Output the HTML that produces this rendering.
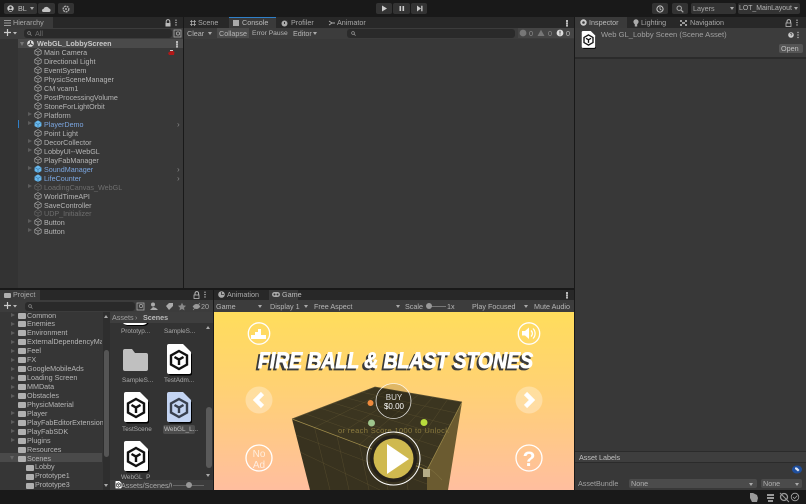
<!DOCTYPE html>
<html><head><meta charset="utf-8"><style>
html,body{margin:0;padding:0;background:#191919}
#r{position:relative;width:806px;height:504px;overflow:hidden;background:#191919;font-family:"Liberation Sans",sans-serif;font-size:7px;color:#b6b6b6;filter:blur(.3px)}
.b{position:absolute}
.t{position:absolute;white-space:nowrap;line-height:9px;height:9px;font-size:7.2px;color:#b6b6b6}
.h{position:absolute;white-space:nowrap;line-height:9px;height:9px;font-size:7.2px;color:#b6b6b6;left:44px}
.blue{color:#7ba6e0}.dim{color:#6e6e6e}
.btn{position:absolute;background:#3a3a3a;border-radius:2px}
svg{position:absolute;overflow:visible}
.ar{position:absolute;width:0;height:0;border-top:2.5px solid transparent;border-bottom:2.5px solid transparent;border-left:4px solid #666}
.dn{position:absolute;width:0;height:0;border-left:2.5px solid transparent;border-right:2.5px solid transparent;border-top:3px solid #aaa}
.gt{position:absolute;left:177px;color:#888;font-size:8px;line-height:9px}
.fd{position:absolute;left:18px;width:8px;height:6px;background:#b0b0b0;border-radius:1px}
.ta{position:absolute;width:0;height:0;border-top:2.5px solid transparent;border-bottom:2.5px solid transparent;border-left:4px solid #5c5c5c;left:11px}
</style></head><body><div id="r">
<svg width="0" height="0" style="position:absolute"><defs>
<symbol id="c" viewBox="0 0 10 10"><path d="M5 .8 9 3v4.2L5 9.4 1 7.2V3zM1 3l4 2.2L9 3M5 5.2v4.2" fill="none" stroke="#adadad" stroke-width=".8"/></symbol>
<symbol id="d" viewBox="0 0 10 10"><path d="M5 .8 9 3v4.2L5 9.4 1 7.2V3zM1 3l4 2.2L9 3M5 5.2v4.2" fill="none" stroke="#666" stroke-width=".8"/></symbol>
<symbol id="p" viewBox="0 0 10 10"><path d="M5 .5 9.3 3v4.6L5 9.8.7 7.6V3z" fill="#67b8ee"/><path d="M.7 3 5 5.4 9.3 3M5 5.4v4.4" fill="none" stroke="#2b5a80" stroke-width=".6"/></symbol>
<symbol id="u" viewBox="0 0 26 32"><path d="M2 3 Q2 1 4 1H17L25 9V28Q25 30 23 30H4Q2 30 2 28Z" fill="#000" transform="translate(1 1.5)"/><path d="M1 2Q1 0 3 0H17L25 8V28Q25 30 23 30H3Q1 30 1 28Z" fill="#fff"/><path d="M13 7 21 11.5V20.5L13 25 5 20.5V11.5ZM8.5 13 13 15.6 17.5 13M13 15.6V21" fill="none" stroke="#111" stroke-width="2.4"/></symbol>
<symbol id="ub" viewBox="0 0 26 32"><path d="M2 3 Q2 1 4 1H17L25 9V28Q25 30 23 30H4Q2 30 2 28Z" fill="#000" transform="translate(1 1.5)"/><path d="M1 2Q1 0 3 0H17L25 8V28Q25 30 23 30H3Q1 30 1 28Z" fill="#c3d4f2"/><path d="M13 7 21 11.5V20.5L13 25 5 20.5V11.5ZM8.5 13 13 15.6 17.5 13M13 15.6V21" fill="none" stroke="#38404e" stroke-width="2.4"/></symbol>
</defs></svg>

<!-- top bar -->
<div class="btn" style="left:4px;top:3px;width:33px;height:11px;background:#333"></div>
<svg style="left:7px;top:5px" width="7" height="7" viewBox="0 0 7 7"><circle cx="3.5" cy="3.5" r="3.2" fill="#ccc"/><circle cx="3.5" cy="2.7" r="1.2" fill="#333"/><path d="M1.5 6c.5-1.6 3.5-1.6 4 0" fill="#333"/></svg>
<div class="t" style="left:18px;top:4px;color:#c0c0c0">BL</div><div class="dn" style="left:30px;top:7px"></div>
<div class="btn" style="left:38px;top:3px;width:17px;height:11px;background:#333"></div>
<svg style="left:42px;top:6px" width="9" height="6" viewBox="0 0 9 6"><path d="M1.5 6A1.5 1.5 0 0 1 1.5 3 3 3 0 0 1 7 2.5 1.8 1.8 0 0 1 7.3 6Z" fill="#c4c4c4"/></svg>
<div class="btn" style="left:58px;top:3px;width:16px;height:11px;background:#333"></div>
<svg style="left:62px;top:5px" width="8" height="8" viewBox="0 0 8 8"><circle cx="4" cy="4" r="2.8" fill="none" stroke="#aaa" stroke-width="1.4" stroke-dasharray="2 .7"/><circle cx="4" cy="4" r="1" fill="#aaa"/></svg>

<div class="btn" style="left:376px;top:3px;width:16px;height:11px;background:#333"></div>
<div class="btn" style="left:393px;top:3px;width:17px;height:11px;background:#333"></div>
<div class="btn" style="left:411px;top:3px;width:16px;height:11px;background:#333"></div>
<svg style="left:376px;top:3px" width="52" height="11" viewBox="0 0 52 11"><path d="M6 2.5 11 5.5 6 8.5Z" fill="#ccc"/><path d="M23.5 3h1.6v5h-1.6zM26.5 3h1.6v5h-1.6z" fill="#ccc"/><path d="M41 2.5 45 5.5 41 8.5ZM45.2 2.7h1.3v5.6h-1.3z" fill="#ccc"/></svg>

<div class="btn" style="left:652px;top:3px;width:16px;height:11px;background:#333"></div>
<svg style="left:656px;top:5px" width="8" height="8" viewBox="0 0 8 8"><circle cx="4" cy="4" r="3.1" fill="none" stroke="#ccc"/><path d="M4 2v2.2l1.5 1" fill="none" stroke="#ccc" stroke-width=".8"/></svg>
<div class="btn" style="left:672px;top:3px;width:16px;height:11px;background:#333"></div>
<svg style="left:676px;top:5px" width="8" height="8" viewBox="0 0 8 8"><circle cx="3.2" cy="3.2" r="2.2" fill="none" stroke="#aaa"/><path d="M4.8 4.8 7.3 7.3" stroke="#aaa" stroke-width="1.1"/></svg>
<div class="btn" style="left:691px;top:3px;width:45px;height:11px;background:#333"></div>
<div class="t" style="left:693px;top:4px;color:#a8a8a8">Layers</div><div class="dn" style="left:730px;top:7px"></div>
<div class="btn" style="left:738px;top:3px;width:62px;height:11px;background:#333"></div>
<div class="t" style="left:739px;top:4px;font-size:6.9px;color:#b4b4b4">LOT_MainLayout</div><div class="dn" style="left:794px;top:7px"></div>

<!-- hierarchy -->
<div class="b" style="left:0;top:17px;width:183px;height:271px;background:#383838"></div>
<div class="b" style="left:0;top:17px;width:183px;height:11px;background:#282828"></div>
<div class="b" style="left:0;top:17px;width:53px;height:11px;background:#3a3a3a"></div>
<svg style="left:4px;top:20px" width="7" height="6" viewBox="0 0 7 6"><path d="M0 .5h7M0 3h7M0 5.5h7" stroke="#999" stroke-width=".9"/></svg>
<div class="t" style="left:13px;top:18px;color:#a8a8a8">Hierarchy</div>
<svg style="left:165px;top:19px" width="12" height="8" viewBox="0 0 12 8"><path d="M1.2 4V2.4a1.8 1.8 0 0 1 3.6 0V4" fill="none" stroke="#bbb"/><rect x=".5" y="4" width="5" height="3.5" fill="#bbb"/><circle cx="11" cy="1.2" r=".7" fill="#bbb"/><circle cx="11" cy="3.6" r=".7" fill="#bbb"/><circle cx="11" cy="6" r=".7" fill="#bbb"/></svg>
<div class="b" style="left:0;top:28px;width:183px;height:11px;background:#3c3c3c"></div>
<svg style="left:4px;top:29px" width="14" height="8" viewBox="0 0 14 8"><path d="M3.5 0v7M0 3.5h7" stroke="#ccc" stroke-width="1.2"/><path d="M9 3h4L11 5.5Z" fill="#bbb"/></svg>
<div class="b" style="left:24px;top:29px;width:148px;height:9px;background:#2a2a2a;border-radius:3px"></div>
<svg style="left:27px;top:31px" width="5" height="5" viewBox="0 0 5 5"><circle cx="2" cy="2" r="1.4" fill="none" stroke="#888" stroke-width=".7"/><path d="M3 3 4.6 4.6" stroke="#888" stroke-width=".7"/></svg>
<div class="t dim" style="left:35px;top:29px;color:#6e6e6e">All</div>
<svg style="left:173px;top:29px" width="9" height="9" viewBox="0 0 9 9"><rect x="1" y="1" width="7" height="7" fill="none" stroke="#aaa" stroke-width=".8"/><circle cx="5" cy="4.5" r="1.6" fill="none" stroke="#aaa" stroke-width=".8"/></svg>
<div class="b" style="left:0;top:39px;width:18px;height:249px;background:#333"></div>
<div class="b" style="left:18px;top:39px;width:165px;height:9px;background:#4a4a4a"></div>
<div class="ar" style="left:20px;top:42px;border:0;border-left:2.5px solid transparent;border-right:2.5px solid transparent;border-top:4px solid #777"></div>
<svg style="left:27px;top:40px" width="7" height="7" viewBox="0 0 7 7"><circle cx="3.5" cy="3.5" r="3.3" fill="#ddd"/><path d="M3.5 1v2.5L1.3 5M3.5 3.5 5.7 5" stroke="#444" stroke-width="1.1" fill="none"/></svg>
<div class="t" style="left:37px;top:39px;font-weight:bold;font-size:7.2px;color:#c8c8c8">WebGL_LobbyScreen</div>
<div class="b" style="left:176px;top:41px;width:1.5px;height:1.5px;background:#bbb;box-shadow:0 2.3px #bbb,0 4.6px #bbb"></div>

<svg style="left:34px;top:48px" width="8" height="8"><use href="#c" width="8" height="8"/></svg><div class="h" style="top:48px">Main Camera</div>
<svg style="left:34px;top:57px" width="8" height="8"><use href="#c" width="8" height="8"/></svg><div class="h" style="top:57px">Directional Light</div>
<svg style="left:34px;top:66px" width="8" height="8"><use href="#c" width="8" height="8"/></svg><div class="h" style="top:66px">EventSystem</div>
<svg style="left:34px;top:75px" width="8" height="8"><use href="#c" width="8" height="8"/></svg><div class="h" style="top:75px">PhysicSceneManager</div>
<svg style="left:34px;top:84px" width="8" height="8"><use href="#c" width="8" height="8"/></svg><div class="h" style="top:84px">CM vcam1</div>
<svg style="left:34px;top:93px" width="8" height="8"><use href="#c" width="8" height="8"/></svg><div class="h" style="top:93px">PostProcessingVolume</div>
<svg style="left:34px;top:102px" width="8" height="8"><use href="#c" width="8" height="8"/></svg><div class="h" style="top:102px">StoneForLightOrbit</div>
<div class="ta" style="left:28px;top:112px"></div><svg style="left:34px;top:111px" width="8" height="8"><use href="#c" width="8" height="8"/></svg><div class="h" style="top:111px">Platform</div>
<div class="b" style="left:18px;top:120px;width:1px;height:8px;background:#2f7fc8"></div>
<div class="ta" style="left:28px;top:121px"></div><svg style="left:34px;top:120px" width="8" height="8"><use href="#p" width="8" height="8"/></svg><div class="h blue" style="top:120px">PlayerDemo</div><div class="gt" style="top:120px">›</div>
<svg style="left:34px;top:129px" width="8" height="8"><use href="#c" width="8" height="8"/></svg><div class="h" style="top:129px">Point Light</div>
<div class="ta" style="left:28px;top:139px"></div><svg style="left:34px;top:138px" width="8" height="8"><use href="#c" width="8" height="8"/></svg><div class="h" style="top:138px">DecorCollector</div>
<div class="ta" style="left:28px;top:148px"></div><svg style="left:34px;top:147px" width="8" height="8"><use href="#c" width="8" height="8"/></svg><div class="h" style="top:147px">LobbyUI--WebGL</div>
<svg style="left:34px;top:156px" width="8" height="8"><use href="#c" width="8" height="8"/></svg><div class="h" style="top:156px">PlayFabManager</div>
<div class="ta" style="left:28px;top:166px"></div><svg style="left:34px;top:165px" width="8" height="8"><use href="#p" width="8" height="8"/></svg><div class="h blue" style="top:165px">SoundManager</div><div class="gt" style="top:165px">›</div>
<svg style="left:34px;top:174px" width="8" height="8"><use href="#p" width="8" height="8"/></svg><div class="h blue" style="top:174px">LifeCounter</div><div class="gt" style="top:174px">›</div>
<div class="ta" style="left:28px;top:184px"></div><svg style="left:34px;top:183px" width="8" height="8"><use href="#d" width="8" height="8"/></svg><div class="h dim" style="top:183px">LoadingCanvas_WebGL</div>
<svg style="left:34px;top:192px" width="8" height="8"><use href="#c" width="8" height="8"/></svg><div class="h" style="top:192px">WorldTimeAPI</div>
<svg style="left:34px;top:201px" width="8" height="8"><use href="#c" width="8" height="8"/></svg><div class="h" style="top:201px">SaveController</div>
<svg style="left:34px;top:209px" width="8" height="8"><use href="#d" width="8" height="8"/></svg><div class="h dim" style="top:209px">UDP_Initializer</div>
<div class="ta" style="left:28px;top:219px"></div><svg style="left:34px;top:218px" width="8" height="8"><use href="#c" width="8" height="8"/></svg><div class="h" style="top:218px">Button</div>
<div class="ta" style="left:28px;top:228px"></div><svg style="left:34px;top:227px" width="8" height="8"><use href="#c" width="8" height="8"/></svg><div class="h" style="top:227px">Button</div>
<svg style="left:167px;top:49px" width="8" height="7" viewBox="0 0 8 7"><path d="M1 4 5 1 7.500 3 7 6H2Z" fill="#b01818"/><path d="M3 1.500h3" stroke="#ccc"/></svg>

<!-- console -->
<div class="b" style="left:184px;top:17px;width:390px;height:271px;background:#383838"></div>
<div class="b" style="left:184px;top:17px;width:390px;height:11px;background:#282828"></div>
<div class="b" style="left:229px;top:17px;width:47px;height:11px;background:#3a3a3a;border-top:1px solid #2f7fc8;box-sizing:border-box"></div>
<svg style="left:190px;top:20px" width="6" height="6" viewBox="0 0 6 6"><path d="M1.500 0v6M4.500 0v6M0 1.500h6M0 4.500h6" stroke="#aaa" stroke-width=".8"/></svg>
<div class="t" style="left:198px;top:18px;color:#a8a8a8">Scene</div>
<div class="b" style="left:233px;top:20px;width:6px;height:6px;background:#aaa"></div>
<div class="t" style="left:242px;top:18px;color:#bbb">Console</div>
<svg style="left:281px;top:19px" width="8" height="8" viewBox="0 0 8 8"><circle cx="3.500" cy="4.500" r="3" fill="#aaa"/><path d="M3.500 3v2M5.500 1 7 2.500" stroke="#333"/></svg>
<div class="t" style="left:291px;top:18px;color:#a8a8a8">Profiler</div>
<svg style="left:328px;top:20px" width="7" height="6" viewBox="0 0 7 6"><path d="M1 1 4 3 1 5M4 3h3" fill="none" stroke="#aaa" stroke-width=".9"/></svg>
<div class="t" style="left:337px;top:18px;color:#a8a8a8">Animator</div>
<div class="b" style="left:184px;top:28px;width:390px;height:11px;background:#3c3c3c"></div>
<div class="t" style="left:187px;top:29px">Clear</div><div class="dn" style="left:208px;top:32px"></div>
<div class="b" style="left:217px;top:28px;width:32px;height:10px;background:#4c4c4c"></div><div class="t" style="left:219px;top:29px">Collapse</div>
<div class="t" style="left:252px;top:29px;font-size:6.7px">Error Pause</div>
<div class="t" style="left:293px;top:29px">Editor</div><div class="dn" style="left:313px;top:32px"></div>
<div class="b" style="left:347px;top:29px;width:168px;height:9px;background:#2a2a2a;border-radius:3px"></div>
<svg style="left:351px;top:31px" width="5" height="5" viewBox="0 0 5 5"><circle cx="2" cy="2" r="1.400" fill="none" stroke="#999" stroke-width=".7"/><path d="M3 3 4.600 4.600" stroke="#999" stroke-width=".7"/></svg>
<div class="b" style="left:518px;top:28px;width:56px;height:10px;background:#454545"></div>
<svg style="left:519px;top:29px" width="55" height="8" viewBox="0 0 55 8"><circle cx="4" cy="4" r="3.400" fill="#777"/><path d="M22 .7 25.500 7h-7Z" fill="#777"/><circle cx="41" cy="4" r="3.400" fill="#ddd"/><path d="M41 1.800v2.800M41 5.400v.8" stroke="#444"/></svg>
<div class="t" style="left:529px;top:29px;color:#8e8e8e">0</div><div class="t" style="left:548px;top:29px;color:#8e8e8e">0</div><div class="t" style="left:566px;top:29px;color:#bbb">0</div>
<div class="b" style="left:566px;top:20px;width:1.500px;height:1.500px;background:#bbb;box-shadow:0 2.300px #bbb,0 4.600px #bbb"></div>

<!-- inspector -->
<div class="b" style="left:575px;top:17px;width:231px;height:473px;background:#383838"></div>
<div class="b" style="left:575px;top:17px;width:231px;height:11px;background:#282828"></div>
<div class="b" style="left:575px;top:17px;width:52px;height:11px;background:#3a3a3a"></div>
<svg style="left:580px;top:19px" width="7" height="7" viewBox="0 0 7 7"><circle cx="3.500" cy="3.500" r="3.200" fill="#ccc"/><circle cx="3.500" cy="3.500" r="1.300" fill="#3a3a3a"/></svg>
<div class="t" style="left:589px;top:18px;color:#bbb">Inspector</div>
<svg style="left:633px;top:19px" width="6" height="8" viewBox="0 0 6 8"><circle cx="3" cy="2.800" r="2.600" fill="#aaa"/><rect x="1.800" y="5" width="2.400" height="2.500" fill="#aaa"/></svg>
<div class="t" style="left:641px;top:18px;color:#a8a8a8">Lighting</div>
<svg style="left:680px;top:20px" width="7" height="6" viewBox="0 0 7 6"><path d="M0 0h2v2H0zM5 0h2v2H5zM0 4h2v2H0zM5 4h2v2H5zM2 2h3v2H2z" fill="#999"/></svg>
<div class="t" style="left:690px;top:18px;color:#a8a8a8">Navigation</div>
<svg style="left:785px;top:19px" width="14" height="8" viewBox="0 0 14 8"><path d="M2 4V2.400a1.800 1.800 0 0 1 3.600 0V4" fill="none" stroke="#bbb"/><rect x="1" y="4" width="5" height="3.500" fill="none" stroke="#bbb" stroke-width=".8"/><circle cx="12" cy="1.200" r=".7" fill="#bbb"/><circle cx="12" cy="3.600" r=".7" fill="#bbb"/><circle cx="12" cy="6" r=".7" fill="#bbb"/></svg>
<div class="b" style="left:575px;top:28px;width:231px;height:29px;background:#3c3c3c"></div>
<svg style="left:581px;top:31px" width="15" height="18"><use href="#u" width="15" height="18"/></svg>
<div class="t" style="left:601px;top:30px;font-size:7.6px;color:#a0a0a0">Web GL_Lobby Sceen (Scene Asset)</div>
<svg style="left:788px;top:31px" width="12" height="8" viewBox="0 0 12 8"><circle cx="3" cy="4" r="2.800" fill="#ccc"/><path d="M2 3.200c.3-1 2-1 2 .1 0 .7-1 .7-1 1.300" stroke="#333" stroke-width=".7" fill="none"/><circle cx="10" cy="1.500" r=".7" fill="#bbb"/><circle cx="10" cy="4" r=".7" fill="#bbb"/><circle cx="10" cy="6.500" r=".7" fill="#bbb"/></svg>
<div class="btn" style="left:779px;top:44px;width:24px;height:9px;background:#555"></div>
<div class="t" style="left:781px;top:44px;color:#c0c0c0">Open</div>
<div class="b" style="left:575px;top:57px;width:231px;height:2px;background:#2b2b2b"></div>
<div class="b" style="left:575px;top:451px;width:231px;height:12px;background:#3e3e3e;border-top:1px solid #2b2b2b;border-bottom:1px solid #2b2b2b;box-sizing:border-box"></div>
<div class="t" style="left:579px;top:453px;color:#c0c0c0">Asset Labels</div>
<svg style="left:792px;top:465px" width="10" height="9" viewBox="0 0 10 9"><ellipse cx="5" cy="4.500" rx="5" ry="4" fill="#1f4f9e"/><path d="M3 2.500 5 2.500 7.500 5 6 6.500 3 4Z" fill="#dfe6f2"/></svg>
<div class="t" style="left:578px;top:479px;color:#a0a0a0">AssetBundle</div>
<div class="btn" style="left:629px;top:479px;width:128px;height:9px;background:#4b4b4b"></div>
<div class="t" style="left:631px;top:479px;color:#b0b0b0">None</div><div class="dn" style="left:749px;top:483px"></div>
<div class="btn" style="left:761px;top:479px;width:41px;height:9px;background:#4b4b4b"></div>
<div class="t" style="left:763px;top:479px;color:#b0b0b0">None</div><div class="dn" style="left:795px;top:483px"></div>

<!-- project -->
<div class="b" style="left:0;top:290px;width:213px;height:200px;background:#383838"></div>
<div class="b" style="left:0;top:290px;width:213px;height:10px;background:#282828"></div>
<div class="b" style="left:0;top:290px;width:40px;height:10px;background:#3a3a3a"></div>
<div class="fd" style="left:4px;top:293px;width:7px;height:5px"></div>
<div class="t" style="left:13px;top:290px;color:#aaa">Project</div>
<svg style="left:193px;top:291px" width="14" height="8" viewBox="0 0 14 8"><path d="M2 4V2.400a1.800 1.800 0 0 1 3.600 0V4" fill="none" stroke="#bbb"/><rect x="1" y="4" width="5" height="3.500" fill="none" stroke="#bbb" stroke-width=".8"/><circle cx="12" cy="1.200" r=".7" fill="#bbb"/><circle cx="12" cy="3.600" r=".7" fill="#bbb"/><circle cx="12" cy="6" r=".7" fill="#bbb"/></svg>
<div class="b" style="left:0;top:300px;width:213px;height:12px;background:#3c3c3c"></div>
<svg style="left:4px;top:302px" width="14" height="8" viewBox="0 0 14 8"><path d="M3.500 0v7M0 3.500h7" stroke="#ccc" stroke-width="1.200"/><path d="M9 3h4L11 5.500Z" fill="#bbb"/></svg>
<div class="b" style="left:25px;top:302px;width:110px;height:9px;background:#2a2a2a;border-radius:3px"></div>
<svg style="left:28px;top:304px" width="5" height="5" viewBox="0 0 5 5"><circle cx="2" cy="2" r="1.400" fill="none" stroke="#888" stroke-width=".7"/><path d="M3 3 4.600 4.600" stroke="#888" stroke-width=".7"/></svg>
<svg style="left:136px;top:302px" width="78" height="9" viewBox="0 0 78 9"><rect x="1" y="1" width="7" height="7" fill="none" stroke="#aaa" stroke-width=".8"/><circle cx="5" cy="4" r="1.600" fill="none" stroke="#aaa" stroke-width=".7"/><circle cx="17" cy="2.500" r="2" fill="#aaa"/><path d="M14 8 17 5 20 6 22 8Z" fill="#aaa"/><path d="M30 4 33 1H37V4L33 8Z" fill="#aaa"/><path d="M46 .8 47.300 3.400 50 3.800 48 5.800 48.500 8.400 46 7 43.500 8.400 44 5.800 42 3.800 44.700 3.400Z" fill="#888"/><path d="M57 4.500C59 1.500 62 1.500 64 4.500 62 7.500 59 7.500 57 4.500ZM57 8 64 1" fill="#999" stroke="#999" stroke-width=".6"/></svg>
<div class="t" style="left:201px;top:302px;color:#aaa">20</div>
<div class="b" style="left:0;top:312px;width:103px;height:178px;background:#363636"></div>
<div class="ta" style="top:313px"></div><div class="fd" style="top:313px"></div><div class="t" style="left:27px;top:311px">Common</div>
<div class="ta" style="top:322px"></div><div class="fd" style="top:321px"></div><div class="t" style="left:27px;top:319px">Enemies</div>
<div class="ta" style="top:331px"></div><div class="fd" style="top:330px"></div><div class="t" style="left:27px;top:328px">Environment</div>
<div class="ta" style="top:340px"></div><div class="fd" style="top:339px"></div><div class="t" style="left:27px;top:337px;width:75px;overflow:hidden">ExternalDependencyManager</div>
<div class="ta" style="top:349px"></div><div class="fd" style="top:348px"></div><div class="t" style="left:27px;top:346px">Feel</div>
<div class="ta" style="top:358px"></div><div class="fd" style="top:357px"></div><div class="t" style="left:27px;top:355px">FX</div>
<div class="ta" style="top:367px"></div><div class="fd" style="top:366px"></div><div class="t" style="left:27px;top:364px">GoogleMobileAds</div>
<div class="ta" style="top:376px"></div><div class="fd" style="top:375px"></div><div class="t" style="left:27px;top:373px">Loading Screen</div>
<div class="ta" style="top:385px"></div><div class="fd" style="top:384px"></div><div class="t" style="left:27px;top:382px">MMData</div>
<div class="ta" style="top:394px"></div><div class="fd" style="top:393px"></div><div class="t" style="left:27px;top:391px">Obstacles</div>
<div class="fd" style="top:402px"></div><div class="t" style="left:27px;top:400px">PhysicMaterial</div>
<div class="ta" style="top:411px"></div><div class="fd" style="top:411px"></div><div class="t" style="left:27px;top:409px">Player</div>
<div class="ta" style="top:420px"></div><div class="fd" style="top:420px"></div><div class="t" style="left:27px;top:418px">PlayFabEditorExtensions</div>
<div class="ta" style="top:429px"></div><div class="fd" style="top:429px"></div><div class="t" style="left:27px;top:427px">PlayFabSDK</div>
<div class="ta" style="top:438px"></div><div class="fd" style="top:438px"></div><div class="t" style="left:27px;top:436px">Plugins</div>
<div class="fd" style="top:447px"></div><div class="t" style="left:27px;top:445px">Resources</div>
<div class="b" style="left:0;top:453px;width:102px;height:9px;background:#4a4a4a"></div>
<div class="b" style="left:10px;top:456px;width:0;height:0;border-left:2.500px solid transparent;border-right:2.500px solid transparent;border-top:4px solid #666"></div>
<div class="fd" style="top:456px"></div><div class="t" style="left:27px;top:454px">Scenes</div>
<div class="fd" style="left:26px;top:465px"></div><div class="t" style="left:35px;top:462px">Lobby</div>
<div class="fd" style="left:26px;top:474px"></div><div class="t" style="left:35px;top:471px">Prototype1</div>
<div class="fd" style="left:26px;top:483px"></div><div class="t" style="left:35px;top:480px">Prototype3</div>
<div class="b" style="left:103px;top:312px;width:7px;height:178px;background:#2e2e2e"></div>
<div class="b" style="left:104px;top:350px;width:5px;height:107px;background:#555;border-radius:3px"></div>
<div class="dn" style="left:104px;top:315px;border-top:0;border-bottom:3px solid #aaa"></div>
<div class="dn" style="left:104px;top:484px"></div>
<div class="b" style="left:110px;top:312px;width:103px;height:11px;background:#3e3e3e"></div>
<div class="t" style="left:112px;top:313px;color:#a0a0a0">Assets</div><div class="t" style="left:135px;top:313px;color:#999">›</div><div class="t" style="left:143px;top:313px;font-weight:bold;color:#bbb">Scenes</div>
<div class="b" style="left:110px;top:323px;width:93px;height:157px;background:#333;overflow:hidden">
<div class="b" style="left:12px;top:-3px;width:26px;height:5px;background:#fff;border-radius:0 0 6px 6px;box-shadow:1px 1px #000"></div>
</div>
<div class="t" style="left:121px;top:327px;font-size:6.400px;color:#aaa">Prototyp...</div>
<div class="t" style="left:164px;top:327px;font-size:6.400px;color:#aaa">SampleS...</div>
<svg style="left:123px;top:349px" width="25" height="22" viewBox="0 0 25 22"><path d="M0 2Q0 0 2 0H9L12 4H23Q25 4 25 6V20Q25 22 23 22H2Q0 22 0 20Z" fill="#c0c0c0"/></svg>
<svg style="left:166px;top:344px" width="26" height="32"><use href="#u" width="26" height="32"/></svg>
<div class="t" style="left:122px;top:376px;font-size:6.400px;color:#aaa">SampleS...</div>
<div class="t" style="left:164px;top:376px;font-size:6.400px;color:#aaa">TestAdm...</div>
<svg style="left:123px;top:392px" width="26" height="32"><use href="#u" width="26" height="32"/></svg>
<svg style="left:166px;top:392px" width="26" height="32"><use href="#ub" width="26" height="32"/></svg>
<div class="t" style="left:122px;top:425px;font-size:6.400px;color:#aaa">TestScene</div>
<div class="b" style="left:163px;top:425px;width:32px;height:9px;background:#4d4d4d;border-radius:2px"></div>
<div class="t" style="left:164px;top:425px;font-size:6.400px;color:#c0c0c0">WebGL_L...</div>
<svg style="left:123px;top:441px" width="26" height="32"><use href="#u" width="26" height="32"/></svg>
<div class="t" style="left:121px;top:473px;font-size:6.400px;color:#aaa">WebGL_P</div>
<div class="b" style="left:203px;top:323px;width:10px;height:157px;background:#333"></div>
<div class="b" style="left:206px;top:407px;width:6px;height:61px;background:#5a5a5a;border-radius:3px"></div>
<div class="dn" style="left:206px;top:326px;border-top:0;border-bottom:3px solid #aaa"></div>
<div class="dn" style="left:206px;top:474px"></div>
<div class="b" style="left:110px;top:480px;width:103px;height:10px;background:#3c3c3c"></div>
<svg style="left:115px;top:481px" width="7" height="8"><use href="#u" width="7" height="8"/></svg>
<div class="t" style="left:121px;top:481px;width:51px;overflow:hidden;color:#aaa">Assets/Scenes/WebGL</div>
<div class="b" style="left:173px;top:484.500px;width:31px;height:1px;background:#666"></div>
<div class="b" style="left:186px;top:482px;width:6px;height:6px;border-radius:3px;background:#999"></div>

<!-- game -->
<div class="b" style="left:214px;top:290px;width:360px;height:200px;background:#383838"></div>
<div class="b" style="left:214px;top:290px;width:360px;height:10px;background:#282828"></div>
<div class="b" style="left:269px;top:290px;width:29px;height:10px;background:#3a3a3a"></div>
<svg style="left:218px;top:291px" width="7" height="7" viewBox="0 0 7 7"><circle cx="3.500" cy="3.500" r="3.300" fill="#aaa"/><path d="M3.500 1v2.500H6" stroke="#333" stroke-width=".8" fill="none"/></svg>
<div class="t" style="left:227px;top:290px;color:#aaa">Animation</div>
<svg style="left:272px;top:292px" width="8" height="5" viewBox="0 0 8 5"><rect width="8" height="5" rx="2.500" fill="#aaa"/><circle cx="2.500" cy="2.500" r="1" fill="#333"/><circle cx="5.500" cy="2.500" r="1" fill="#333"/></svg>
<div class="t" style="left:282px;top:290px;color:#bbb">Game</div>
<div class="b" style="left:566px;top:292px;width:1.500px;height:1.500px;background:#bbb;box-shadow:0 2.300px #bbb,0 4.600px #bbb"></div>
<div class="b" style="left:214px;top:300px;width:360px;height:12px;background:#3c3c3c"></div>
<div class="t" style="left:216px;top:302px">Game</div><div class="dn" style="left:258px;top:305px"></div>
<div class="t" style="left:270px;top:302px">Display 1</div><div class="dn" style="left:304px;top:305px"></div>
<div class="t" style="left:314px;top:302px">Free Aspect</div><div class="dn" style="left:396px;top:305px"></div>
<div class="t" style="left:405px;top:302px">Scale</div>
<div class="b" style="left:427px;top:305.500px;width:19px;height:1px;background:#777"></div><div class="b" style="left:426px;top:303px;width:6px;height:6px;border-radius:3px;background:#999"></div>
<div class="t" style="left:447px;top:302px">1x</div>
<div class="t" style="left:472px;top:302px">Play Focused</div><div class="dn" style="left:524px;top:305px"></div>
<div class="t" style="left:534px;top:302px">Mute Audio</div>
<div class="b" style="left:214px;top:312px;width:360px;height:178px;background:linear-gradient(#ffdd5c,#ffd272 40%,#ffbe9f)"></div>
<svg style="left:214px;top:312px" width="360" height="178" viewBox="214 312 360 178">
<defs><clipPath id="g"><rect x="214" y="312" width="360" height="178"/></clipPath></defs>
<g clip-path="url(#g)">
<path d="M292 419 375 387 462 402 427 470Z" fill="#3b3520"/>
<path d="M292 419 427 470V490H310Z" fill="#38321f"/>
<path d="M427 470 462 402 448 490H427Z" fill="#6b5b30"/>
<g stroke="#6a5d36" stroke-opacity=".55" stroke-width=".5" fill="none">
<path d="M306 414 433 459M320 408 439 447M333.500 403 444.500 436M347 398 450 425M361 392 456 413"/>
<path d="M314.500 427.500 389.500 389.500M337 436 404 392M359.500 444.500 418.500 394.500M382 453 433 397M404.500 461.500 447.500 399.500"/>
<path d="M314.500 427.500 330 490M337 436 349 490M359.500 444.500 369 490M382 453 388 490M404.500 461.500 408 490"/>
<path d="M296 435 427 484M300 452 380 490"/>
</g>
<path d="M292 419 427 470 462 402" fill="none" stroke="#a08d4c" stroke-width=".7"/>
<path d="M292 419 375 387 462 402" fill="none" stroke="#5b5030" stroke-width=".7"/>
<path d="M414 463Q428 464 442 480" fill="none" stroke="#8d7f4a" stroke-opacity=".6" stroke-width=".6"/>
<rect x="423" y="469" width="7" height="8" fill="#b5ad88"/>
</g>
<text x="258" y="368" textLength="275" lengthAdjust="spacingAndGlyphs" font-family="Liberation Sans" font-weight="bold" font-style="italic" font-size="22" fill="#3a3a3a" stroke="#3a3a3a" stroke-width=".8" transform="translate(-2.200 2)">FIRE BALL &amp; BLAST STONES</text>
<text x="258" y="368" textLength="275" lengthAdjust="spacingAndGlyphs" font-family="Liberation Sans" font-weight="bold" font-style="italic" font-size="22" fill="#fff" stroke="#fff" stroke-width=".9">FIRE BALL &amp; BLAST STONES</text>
<g fill="none" stroke="#fff" stroke-width="1.300">
<circle cx="259" cy="333.500" r="10.700"/><circle cx="529" cy="333.500" r="10.700"/>
<circle cx="259" cy="458" r="13"/><circle cx="529" cy="458" r="13"/>
</g>
<path d="M251 339v-4h4v-3h3v-3h3v6h5v4Z" fill="#fff"/>
<path d="M522 331h3l4-3.500v11.500l-4-3.500h-3Z" fill="#fff"/><path d="M531 330.500a4 4 0 0 1 0 6M533 328.500a7 7 0 0 1 0 10" fill="none" stroke="#fff" stroke-width="1.200"/>
<circle cx="259" cy="400" r="13.500" fill="#fff" fill-opacity=".3"/><circle cx="529" cy="400" r="13.500" fill="#fff" fill-opacity=".3"/>
<path d="M262.500 393.500 256 400 262.500 406.500" fill="none" stroke="#fff" stroke-width="4.500"/><path d="M525.500 393.500 532 400 525.500 406.500" fill="none" stroke="#fff" stroke-width="4.500"/>
<text x="259" y="457" text-anchor="middle" font-family="Liberation Sans" font-size="10" fill="#fff" fill-opacity=".7">No</text>
<text x="259" y="468" text-anchor="middle" font-family="Liberation Sans" font-size="10" fill="#fff" fill-opacity=".7">Ad</text>
<text x="529" y="466" text-anchor="middle" font-family="Liberation Sans" font-weight="bold" font-size="21" fill="#fff">?</text>
<circle cx="393.500" cy="401" r="17.500" fill="#000" fill-opacity=".12" stroke="#fff" stroke-opacity=".85" stroke-width=".8"/>
<text x="394" y="400" text-anchor="middle" font-family="Liberation Sans" font-size="8" fill="#ddd">BUY</text>
<text x="394" y="409" text-anchor="middle" font-family="Liberation Sans" font-size="8" fill="#fff">$0.00</text>
<circle cx="370.500" cy="403" r="3" fill="#f08a3c"/>
<circle cx="371.500" cy="423" r="3.500" fill="#9ec58c"/>
<circle cx="424" cy="422.500" r="3.500" fill="#b8dc3c"/>
<text x="338" y="433" textLength="111" font-family="Liberation Sans" font-size="7.500" fill="#8a7a3e">or reach Score 1000 to Unlock</text>
<circle cx="393.500" cy="458.500" r="26.500" fill="none" stroke="#fff" stroke-width="1"/>
<circle cx="393.500" cy="458.500" r="23.500" fill="#25211a"/>
<circle cx="393.500" cy="458.500" r="20" fill="#cfb94f"/>
<path d="M387 444 409 459 387 474Z" fill="#fff"/>
</svg>

<!-- status bar -->
<svg style="left:748px;top:491px" width="56" height="12" viewBox="0 0 56 12"><g fill="#9a9a9a"><path d="M2 2h3l4 2 1 3-1 4H4L2 7Z"/><path d="M19 3h7v2h-7zM19 6h7v2h-7zM20 9h5v2h-5z"/><circle cx="36" cy="6" r="3.500" fill="none" stroke="#9a9a9a" stroke-width="1.300"/><path d="M32 2 41 11" stroke="#9a9a9a"/></g><circle cx="47" cy="6" r="3.800" fill="none" stroke="#aaa" stroke-width=".8"/><path d="M45 6 46.600 7.600 49.300 4.600" fill="none" stroke="#aaa" stroke-width=".8"/></svg>
</div></body></html>
